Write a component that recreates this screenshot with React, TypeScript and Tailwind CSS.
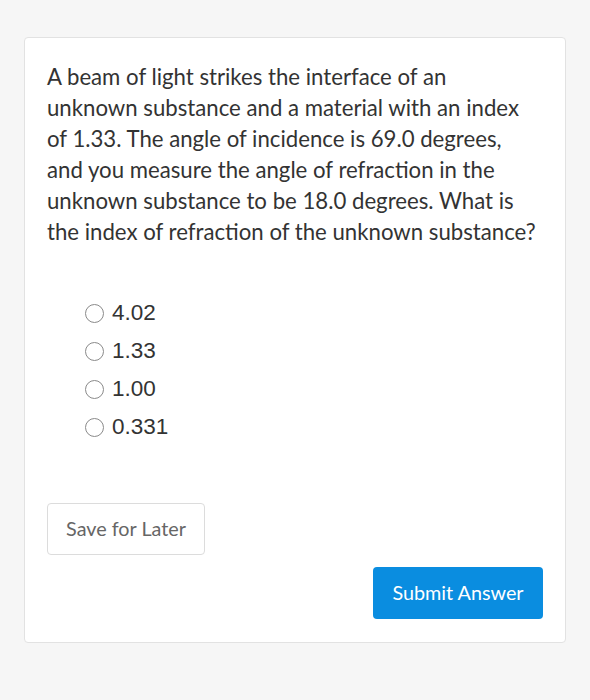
import React from "react";

const options = ["4.02", "1.33", "1.00", "0.331"];

export default function App() {
  return (
    <div className="min-h-[700px] w-[590px] bg-[#f6f6f6] pt-[37px] pl-[24px]">
      <div className="w-[542px] h-[606px] bg-white border border-[#e2e2e2] rounded-[4px] px-[22px] pt-[23px] flex flex-col" style={{ fontFamily: "Lato, 'Open Sans', sans-serif" }}>
        <p className="w-[496px] text-[22.2px] leading-[31px] text-[#333333]">
          A beam of light strikes the interface of an<br />unknown substance and a material with an index of 1.33. The angle of incidence is 69.0 degrees, and you measure the angle of refraction in the unknown substance to be 18.0 degrees. What is the index of refraction of the unknown substance?
        </p>
        <div className="mt-[53px] pl-[38px] flex flex-col gap-[12px]" style={{ fontFamily: "'Liberation Sans', Arial, sans-serif" }}>
          {options.map((o) => (
            <label key={o} className="flex items-center h-[26px] text-[22.5px] text-[#333333]">
              <span className="w-[19px] h-[19px] rounded-full border-[1.5px] border-[#8a8a8a] mr-[8px]" />
              {o}
            </label>
          ))}
        </div>
        <div className="mt-[63px]">
          <button className="h-[52px] w-[158px] border border-[#dcdcdc] rounded-[4px] bg-white text-[19.8px] text-[#666666]">
            Save for Later
          </button>
        </div>
        <div className="mt-[12px] flex justify-end">
          <button className="h-[52px] w-[170px] rounded-[4px] bg-[#0a8de0] text-[19.8px] text-white">
            Submit Answer
          </button>
        </div>
      </div>
    </div>
  );
}
